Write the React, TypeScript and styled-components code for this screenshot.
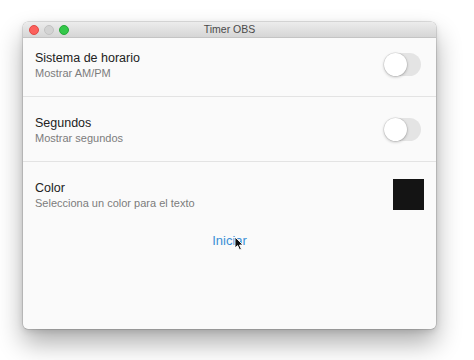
import React, { useState } from "react"
import styled, { createGlobalStyle } from "styled-components"

const GlobalStyle = createGlobalStyle`
  html, body {
    margin: 0;
    padding: 0;
    background: #ffffff;
    font-family: "Liberation Sans", Arial, Helvetica, sans-serif;
  }
  * { box-sizing: border-box; }
`

const Desktop = styled.div`
  width: 474px;
  height: 360px;
  padding: 22px 0 0 23px;
  overflow: hidden;
`

const Window = styled.div`
  width: 413px;
  height: 307px;
  border-radius: 5px;
  background: #fafafa;
  overflow: hidden;
  display: flex;
  flex-direction: column;
  box-shadow: 0 0 0 0.5px rgba(0, 0, 0, 0.22), 0 14px 26px rgba(0, 0, 0, 0.32),
    0 2px 6px rgba(0, 0, 0, 0.12);
`

const TitleBar = styled.div`
  position: relative;
  height: 16px;
  flex: none;
  display: flex;
  align-items: center;
  justify-content: center;
  background: linear-gradient(#ececec, #d6d6d6);
  border-bottom: 1px solid #c4c4c4;
`

const Lights = styled.div`
  position: absolute;
  left: 6px;
  top: 0;
  height: 100%;
  display: flex;
  align-items: center;
  gap: 5px;
`

const Light = styled.span<{ $color: string; $edge: string }>`
  width: 10px;
  height: 10px;
  border-radius: 50%;
  background: ${(p) => p.$color};
  border: 0.5px solid ${(p) => p.$edge};
`

const Title = styled.span`
  font-size: 10.5px;
  color: #4a4a4a;
  line-height: 1;
`

const Row = styled.div<{ $first?: boolean; $last?: boolean }>`
  display: flex;
  align-items: center;
  justify-content: space-between;
  height: ${(p) => (p.$first ? 59 : 65)}px;
  padding: 0 12px ${(p) => (p.$first ? 5 : 0)}px 12px;
  border-bottom: ${(p) => (p.$last ? "none" : "1px solid #e3e3e3")};
  flex: none;
`

const Texts = styled.div`
  display: flex;
  flex-direction: column;
  padding-top: 2px;
`

const Label = styled.span`
  font-size: 12.5px;
  line-height: 15px;
  color: #222;
`

const Hint = styled.span`
  font-size: 11px;
  line-height: 14px;
  color: #7c7c7c;
`

const Track = styled.button<{ $on: boolean }>`
  position: relative;
  width: 37px;
  height: 23px;
  margin-right: 3px;
  padding: 0;
  border: none;
  border-radius: 12px;
  background: ${(p) => (p.$on ? "#3a8fd6" : "#e4e4e4")};
  cursor: pointer;
`

const Knob = styled.span<{ $on: boolean }>`
  position: absolute;
  top: 0;
  left: ${(p) => (p.$on ? 14 : 0)}px;
  width: 23px;
  height: 23px;
  border-radius: 50%;
  background: #fff;
  box-shadow: 0 0 0 0.5px rgba(0, 0, 0, 0.12), 0 1px 3px rgba(0, 0, 0, 0.25);
`

const Swatch = styled.div<{ $color: string }>`
  width: 31px;
  height: 31px;
  background: ${(p) => p.$color};
`

const Footer = styled.div`
  display: flex;
  justify-content: center;
  padding-top: 6px;
`

const StartLink = styled.span`
  position: relative;
  font-size: 13px;
  line-height: 16px;
  color: #3a8fd6;
  cursor: pointer;
`

const Pointer = styled.svg`
  position: absolute;
  left: 22px;
  top: 3px;
  width: 10px;
  height: 15px;
`

const Toggle = ({ on, onClick }: { on: boolean; onClick: () => void }) => (
  <Track $on={on} onClick={onClick}>
    <Knob $on={on} />
  </Track>
)

export default function App() {
  const [ampm, setAmpm] = useState(false)
  const [seconds, setSeconds] = useState(false)

  return (
    <>
      <GlobalStyle />
      <Desktop>
        <Window>
          <TitleBar>
            <Lights>
              <Light $color="#fc605c" $edge="#de4a45" />
              <Light $color="#d3d3d3" $edge="#c2c2c2" />
              <Light $color="#34c84a" $edge="#27a83a" />
            </Lights>
            <Title>Timer OBS</Title>
          </TitleBar>

          <Row $first>
            <Texts>
              <Label>Sistema de horario</Label>
              <Hint>Mostrar AM/PM</Hint>
            </Texts>
            <Toggle on={ampm} onClick={() => setAmpm(!ampm)} />
          </Row>

          <Row>
            <Texts>
              <Label>Segundos</Label>
              <Hint>Mostrar segundos</Hint>
            </Texts>
            <Toggle on={seconds} onClick={() => setSeconds(!seconds)} />
          </Row>

          <Row $last>
            <Texts>
              <Label>Color</Label>
              <Hint>Selecciona un color para el texto</Hint>
            </Texts>
            <Swatch $color="#141414" />
          </Row>

          <Footer>
            <StartLink>
              Iniciar
              <Pointer viewBox="0 0 10 15">
                <path
                  d="M1 1 L1 12 L3.6 9.6 L5.6 14 L7.4 13.2 L5.5 9 L9 9 Z"
                  fill="#111"
                  stroke="#fff"
                  strokeWidth="0.9"
                  strokeLinejoin="round"
                />
              </Pointer>
            </StartLink>
          </Footer>
        </Window>
      </Desktop>
    </>
  )
}
